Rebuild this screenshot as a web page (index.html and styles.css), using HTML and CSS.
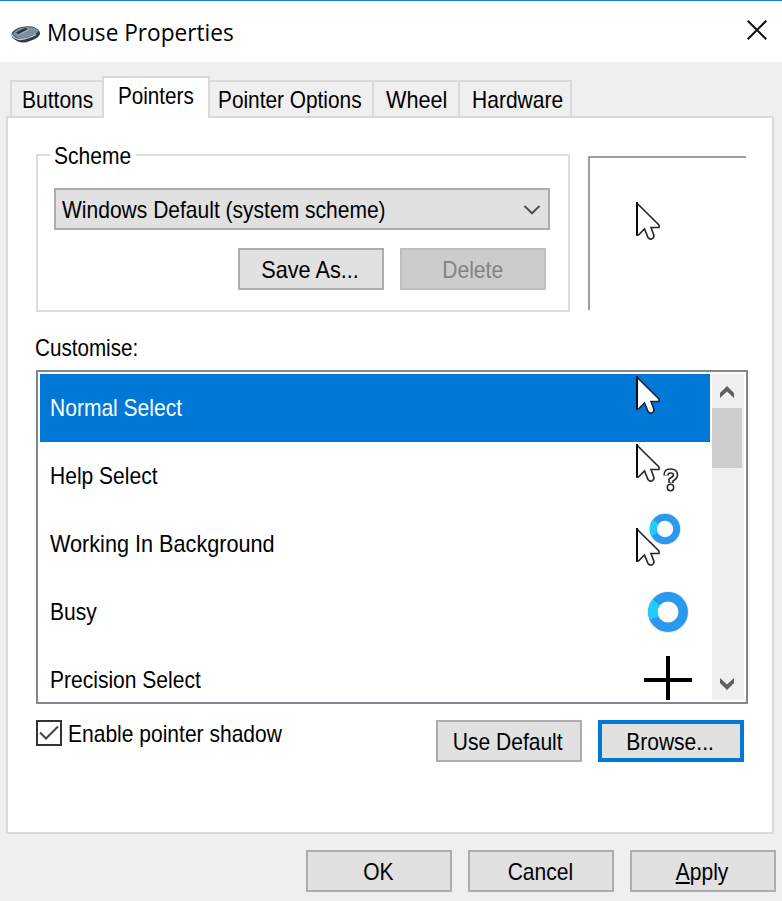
FILE: index.html
```html
<!DOCTYPE html>
<html lang="en">
<head>
<meta charset="utf-8">
<title>Mouse Properties</title>
<link rel="stylesheet" href="styles.css">
</head>
<body>
<svg class="defs" width="0" height="0">
  <symbol id="pointer" viewBox="0 0 26 40">
    <path d="M1 1.2V33H2.5L8.500 27L12 35.500Q13.500 37.500 15.800 37Q18.500 36 17.800 33L15 25.500H23V23Z" fill="#fff" stroke="#242434" stroke-width="1.6"/>
    <path d="M1 0V33.5" stroke="#080818" stroke-width="2"/>
  </symbol>
</svg>
<div class="window">
  <header class="titlebar">
    <svg class="mouse" width="30" height="18" viewBox="0 0 30 18">
      <path d="M.5 8Q1 5 7 2Q14-.5 21 .6Q29 3 29 8Q28 12 19 15Q12 18 6 15Q0 12 .5 8Z" fill="#343c44"/>
      <path d="M1.5 7.8Q3 5 8 2.5Q14 .2 21 1.3Q26 2.5 27.5 5Q25 9 17 11Q9 14 5 11Z" fill="#7b8ea3"/>
      <path d="M1 8.5Q3 13 9 13.5Q18 12.5 25 8.5" fill="none" stroke="#c9d0d6" stroke-width="1.3"/>
      <path d="M5 6.5L14 2L17 3L7.5 8Z" fill="#252d36"/>
      <path d="M8 8.5L18 3.5" stroke="#9eafc0" stroke-width="1"/>
    </svg>
    <h1 class="title">Mouse Properties</h1>
    <svg class="close" width="20" height="20" viewBox="0 0 20 20"><path d="M.7.7L19.3 19.3M19.3.7L.7 19.3" stroke="#111" stroke-width="2"/></svg>
  </header>

  <nav class="tabs">
    <div class="tab tab-buttons"><span class="t">Buttons</span></div>
    <div class="tab tab-active"><span class="t">Pointers</span></div>
    <div class="tab tab-options"><span class="t">Pointer Options</span></div>
    <div class="tab tab-wheel"><span class="t wide">Wheel</span></div>
    <div class="tab tab-hardware"><span class="t">Hardware</span></div>
  </nav>

  <main class="panel">
    <div class="top">
      <section class="group">
        <div class="legend"><span class="t">Scheme</span></div>
        <div class="combo"><span class="t">Windows Default (system scheme)</span>
          <svg width="18" height="12" viewBox="0 0 18 12"><path d="M1.5 3L9 10.3L16.500 3" fill="none" stroke="#505050" stroke-width="1.9"/></svg>
        </div>
        <div class="group-actions">
          <div class="btn"><span class="t wide">Save As...</span></div>
          <div class="btn disabled"><span class="t">Delete</span></div>
        </div>
      </section>
      <div class="preview"><svg width="26" height="40"><use href="#pointer"/></svg></div>
    </div>

    <div class="label"><span class="t">Customise:</span></div>
    <div class="list">
      <div class="rows">
        <div class="row selected"><span class="t">Normal Select</span><svg width="70" height="68"><use href="#pointer" x="0" y="2" width="26" height="40"/></svg></div>
        <div class="row"><span class="t">Help Select</span><svg width="70" height="68"><use href="#pointer" x="0" y="2" width="26" height="40"/>
          <path d="M30 33.500Q30 29 34.500 29Q39.500 29 39.500 33Q39.500 35.500 35 38V41" fill="none" stroke="#242434" stroke-width="5.500"/>
          <circle cx="34.500" cy="45.500" r="3.200" fill="#fff" stroke="#242434" stroke-width="1.500"/>
          <path d="M30 33Q30 29 34.500 29Q39.500 29 39.500 33Q39.500 35.500 35 38V40.500" fill="none" stroke="#fff" stroke-width="2.400"/></svg></div>
        <div class="row"><span class="t wide">Working In Background</span><svg width="70" height="68">
          <circle cx="29" cy="19" r="16" fill="#ececec"/><circle cx="29" cy="19" r="11.700" fill="#fff" stroke="#2b98f0" stroke-width="7"/><path d="M18.600 24.500A11.700 11.700 0 0 1 19.800 11.800" fill="none" stroke="#20ccff" stroke-width="7"/>
          <use href="#pointer" x="0" y="18" width="26" height="40"/></svg></div>
        <div class="row"><span class="t">Busy</span><svg width="70" height="68">
          <circle cx="32" cy="34" r="21" fill="#e9e9e9"/><circle cx="32" cy="34" r="15.200" fill="#fff" stroke="#2b98f0" stroke-width="9.500"/><path d="M18 40A15.200 15.200 0 0 1 20.300 24.300" fill="none" stroke="#20ccff" stroke-width="9.500"/></svg></div>
        <div class="row"><span class="t">Precision Select</span><svg width="70" height="68"><path d="M8 34H56M32 10V54" stroke="#000" stroke-width="4"/></svg></div>
      </div>
      <div class="scrollbar">
        <svg width="16" height="12" viewBox="0 0 16 12"><path d="M1 12V7L8 0L15 7V12L8 5.500Z" fill="#606060"/></svg>
        <div class="thumb"></div>
        <svg class="down" width="16" height="12" viewBox="0 0 16 12"><path d="M1 0V5L8 12L15 5V0L8 6.500Z" fill="#606060"/></svg>
      </div>
    </div>

    <div class="bottom">
      <div class="checkbox"><svg width="22" height="22" viewBox="0 0 22 22"><path d="M2 10.500L8 16.500L20 4.500" fill="none" stroke="#444" stroke-width="2"/></svg></div>
      <span class="t check-label">Enable pointer shadow</span>
      <div class="actions">
        <div class="btn"><span class="t">Use Default</span></div>
        <div class="btn default"><span class="t">Browse...</span></div>
      </div>
    </div>
  </main>

  <footer class="footer">
    <div class="btn"><span class="t">OK</span></div>
    <div class="btn"><span class="t">Cancel</span></div>
    <div class="btn"><span class="t"><span class="key">A</span>pply</span></div>
  </footer>
</div>
</body>
</html>
```
FILE: styles.css
```css
* { box-sizing: border-box; }
body { margin: 0; overflow: hidden; font: 24px/28px "Liberation Sans", Arial, sans-serif; color: #000; }
svg { display: block; flex: none; }
.defs { position: absolute; }
.window { width: 782px; height: 901px; background: #efefef; }
.t { display: inline-block; white-space: nowrap; transform: scaleX(.876); transform-origin: left; }
.wide { transform: scaleX(.902); }

.titlebar { height: 62px; background: #fff; border-top: 1px solid #1980d8; display: flex; align-items: flex-start; padding-left: 11px; }
.mouse { margin-top: 25px; }
.title { margin: 14px 0 0 6px; font: 400 24px/34px "Open Sans", sans-serif; transform: scaleX(.943); transform-origin: left; white-space: nowrap; }
.close { margin: 19px 15px 0 auto; }

.tabs { display: flex; align-items: flex-end; height: 56px; padding-left: 10px; }
.tab { height: 38px; border: 2px solid #d9d9d9; border-left: 0; padding-top: 4px; }
.tab-buttons { width: 92px; border-left: 2px solid #d9d9d9; border-right: 0; padding-left: 10px; }
.tab-active { width: 108px; height: 42px; border-left: 2px solid #d9d9d9; border-bottom: 0; background: #fff; padding-left: 14px; position: relative; z-index: 1; }
.tab-active .t { transform: scaleX(.86); }
.tab-options { width: 164px; padding-left: 8px; }
.tab-options .t { transform: scaleX(.868); }
.tab-wheel { width: 86px; padding-left: 12px; }
.tab-hardware { width: 112px; padding-left: 12px; }

.panel { margin: -2px 8px 0 6px; height: 718px; background: #fff; border: 2px solid #d9d9d9; padding: 36px 24px 0 28px; }
.top { display: flex; height: 158px; }
.group { width: 534px; height: 158px; border: 2px solid #dcdcdc; padding: 0 18px 0 16px; display: flex; flex-direction: column; }
.legend { width: 86px; height: 28px; margin: -14px 0 0 -4px; padding-left: 4px; background: #fff; }
.combo { margin-top: 18px; height: 42px; background: #e1e1e1; border: 2px solid #adadad; display: flex; align-items: center; justify-content: space-between; padding: 2px 7px 0 6px; }
.combo svg { margin-top: -2px; }
.group-actions { display: flex; gap: 16px; justify-content: flex-end; margin: 18px 4px 0 0; }
.btn { width: 146px; height: 42px; background: #e1e1e1; border: 2px solid #adadad; display: flex; align-items: center; justify-content: center; padding: 2px 2px 0 0; }
.btn .t { transform-origin: center; }
.disabled { background: #ccc; border-color: #bfbfbf; color: #838383; padding-right: 0; }
.preview { width: 158px; height: 154px; margin: 2px 0 0 18px; border: solid #a0a0a0; border-width: 2px 0 0 2px; padding: 44px 0 0 46px; }

.label { height: 58px; padding-top: 22px; }
.label .t { margin-left: -1px; transform: scaleX(.86); }
.list { width: 712px; height: 334px; border: 2px solid #828790; padding: 2px; display: flex; justify-content: space-between; }
.rows { width: 670px; height: 326px; overflow: hidden; }
.row { height: 68px; display: flex; align-items: center; justify-content: space-between; padding: 0 4px 0 10px; }
.selected { background: #0078d7; color: #fff; }
.scrollbar { width: 32px; background: #efefef; padding: 12px 0 10px; display: flex; flex-direction: column; }
.scrollbar svg { margin-left: 7px; }
.thumb { width: 30px; height: 60px; margin-top: 10px; background: #cdcdcd; }
.scrollbar .down { margin-top: auto; }

.bottom { display: flex; margin-top: 16px; width: 708px; }
.checkbox { width: 26px; height: 26px; border: 2px solid #333; }
.check-label { margin-left: 6px; }
.actions { margin-left: auto; display: flex; gap: 16px; }
.default { border: 4px solid #0078d7; }
.footer { display: flex; justify-content: flex-end; gap: 16px; padding: 16px 6px 0 0; }
.key { text-decoration: underline; text-decoration-thickness: 2px; text-underline-offset: 2px; }
```
